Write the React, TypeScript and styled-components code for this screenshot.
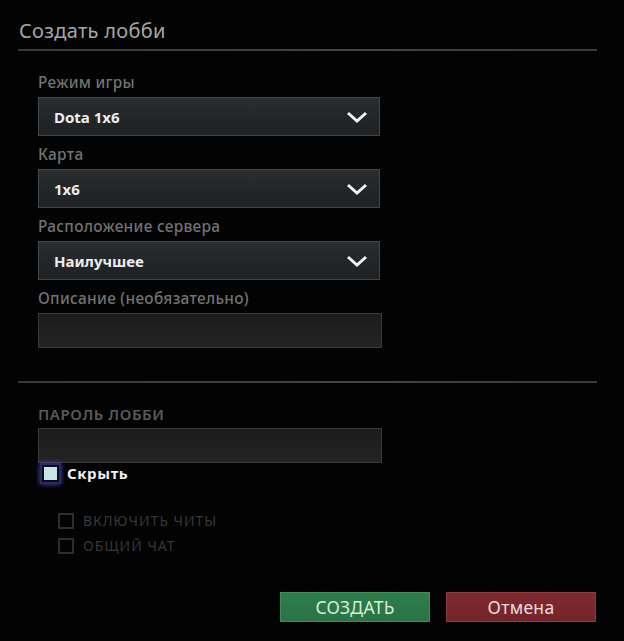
import styled, { createGlobalStyle } from "styled-components";

const GlobalStyle = createGlobalStyle`
  html, body {
    margin: 0;
    padding: 0;
    background: #030303;
  }
  body {
    font-family: "Noto Sans", "Open Sans", sans-serif;
  }
`;

const Page = styled.div`
  width: 624px;
  height: 641px;
  background: #030303;
  box-sizing: border-box;
  padding-top: 18px;
  display: flex;
  flex-direction: column;
`;

const Title = styled.h1`
  margin: 0 0 0 19px;
  font-size: 20px;
  font-weight: 400;
  line-height: 26px;
  color: #a6a6a6;
  letter-spacing: 0.3px;
`;

const Divider = styled.div<{ gap?: number }>`
  height: 2px;
  margin: ${(p) => p.gap ?? 0}px 27px 0 18px;
  background: linear-gradient(90deg, #3a3a3a, #444 60%, #3a3a3a);
`;

const Section = styled.div<{ top: number }>`
  display: flex;
  flex-direction: column;
  padding-left: 38px;
  margin-top: ${(p) => p.top}px;
`;

const Field = styled.div`
  display: flex;
  flex-direction: column;
  margin-bottom: 10px;
`;

const Label = styled.div<{ caps?: boolean }>`
  font-size: ${(p) => (p.caps ? "15px" : "15.4px")};
  font-weight: ${(p) => (p.caps ? 600 : 500)};
  line-height: 18px;
  margin-bottom: 5px;
  color: ${(p) => (p.caps ? "#5a5a5a" : "#727272")};
  text-transform: ${(p) => (p.caps ? "uppercase" : "none")};
  letter-spacing: ${(p) => (p.caps ? "0.6px" : "0.3px")};
`;

const Select = styled.div`
  width: 342px;
  height: 39px;
  box-sizing: border-box;
  border: 1px solid #42474a;
  background: linear-gradient(180deg, #2a2e30 0%, #232628 55%, #1f2224 100%);
  display: flex;
  align-items: center;
  justify-content: space-between;
  padding: 0 11px 0 15px;
  color: #ececec;
  font-weight: 700;
  font-size: 15px;
`;

const TextInput = styled.div`
  width: 344px;
  height: 35px;
  box-sizing: border-box;
  border: 1px solid #3a3a3a;
  background: linear-gradient(180deg, #1b1b1b 0%, #242424 100%);
`;

const CheckRow = styled.label<{ disabled?: boolean }>`
  display: flex;
  align-items: center;
  gap: ${(p) => (p.disabled ? "9px" : "8px")};
  height: ${(p) => (p.disabled ? "25px" : "18px")};
  margin-left: ${(p) => (p.disabled ? "20px" : "4px")};
  color: ${(p) => (p.disabled ? "#373737" : "#efefef")};
  font-size: ${(p) => (p.disabled ? "14px" : "15px")};
  font-weight: ${(p) => (p.disabled ? 400 : 700)};
  letter-spacing: ${(p) => (p.disabled ? "1px" : "0.6px")};
`;

const Box = styled.span<{ checked?: boolean }>`
  box-sizing: border-box;
  width: ${(p) => (p.checked ? "17px" : "16px")};
  height: ${(p) => (p.checked ? "17px" : "16px")};
  border: ${(p) => (p.checked ? "2px solid #0b0b1c" : "2px solid #2e2e2e")};
  background: ${(p) => (p.checked ? "#c6e6e4" : "transparent")};
  box-shadow: ${(p) =>
    p.checked ? "0 0 0 2px #2a2a6a, 0 0 5px 2px #4a4ab0" : "none"};
`;

const Options = styled.div`
  display: flex;
  flex-direction: column;
  margin-top: 26px;
`;

const Footer = styled.div`
  display: flex;
  justify-content: flex-end;
  gap: 16px;
  margin-top: 34px;
  padding-right: 28px;
`;

const Button = styled.button<{ tone: "ok" | "cancel" }>`
  width: 150px;
  height: 30px;
  border: 1px solid ${(p) => (p.tone === "ok" ? "#3f8e5c" : "#8e3a40")};
  background: ${(p) =>
    p.tone === "ok"
      ? "linear-gradient(180deg, #2f7d4d 0%, #2a7345 100%)"
      : "linear-gradient(180deg, #7e2a30 0%, #732529 100%)"};
  color: ${(p) => (p.tone === "ok" ? "#d4efdb" : "#f0dcdc")};
  font-family: "Noto Sans", "Open Sans", sans-serif;
  font-size: 17.5px;
  letter-spacing: 0.3px;
  padding: 0;
`;

function Chevron() {
  return (
    <svg width="22" height="14" viewBox="0 0 22 14">
      <path
        d="M2 3 L11 11 L20 3"
        fill="none"
        stroke="#f2f2f2"
        strokeWidth="3"
        strokeLinejoin="miter"
      />
    </svg>
  );
}

const selects = [
  { label: "Режим игры", value: "Dota 1x6" },
  { label: "Карта", value: "1x6" },
  { label: "Расположение сервера", value: "Наилучшее" },
];

export default function App() {
  return (
    <Page>
      <GlobalStyle />
      <Title>Создать лобби</Title>
      <Divider gap={5} />
      <Section top={23}>
        {selects.map((s) => (
          <Field key={s.label}>
            <Label>{s.label}</Label>
            <Select>
              <span>{s.value}</span>
              <Chevron />
            </Select>
          </Field>
        ))}
        <Field>
          <Label>Описание (необязательно)</Label>
          <TextInput />
        </Field>
      </Section>
      <Divider gap={23} />
      <Section top={22}>
        <Label caps>Пароль лобби</Label>
        <TextInput />
        <CheckRow style={{ marginTop: 1 }}>
          <Box checked />
          Скрыть
        </CheckRow>
        <Options>
          <CheckRow disabled>
            <Box />
            ВКЛЮЧИТЬ ЧИТЫ
          </CheckRow>
          <CheckRow disabled>
            <Box />
            ОБЩИЙ ЧАТ
          </CheckRow>
        </Options>
      </Section>
      <Footer>
        <Button tone="ok">СОЗДАТЬ</Button>
        <Button tone="cancel">Отмена</Button>
      </Footer>
    </Page>
  );
}
